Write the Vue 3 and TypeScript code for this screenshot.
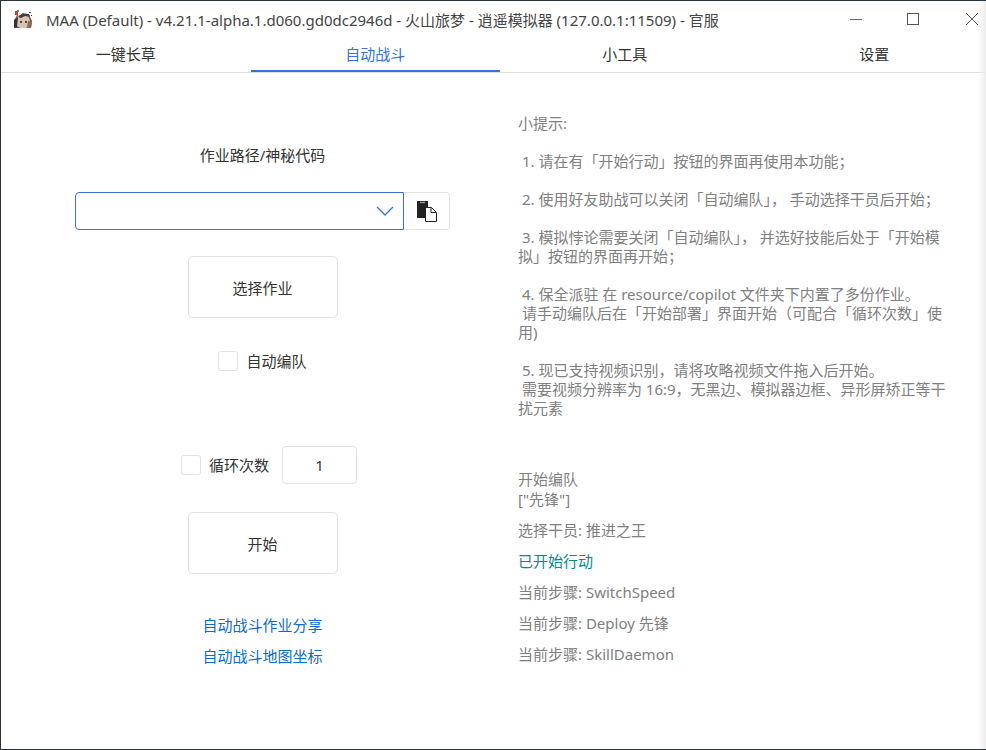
<script setup lang="ts">
const tabs = [
  { label: '一键长草', active: false },
  { label: '自动战斗', active: true },
  { label: '小工具', active: false },
  { label: '设置', active: false },
]
const tips = `小提示:

 1. 请在有「开始行动」按钮的界面再使用本功能；

 2. 使用好友助战可以关闭「自动编队」， 手动选择干员后开始；

 3. 模拟悖论需要关闭「自动编队」， 并选好技能后处于「开始模拟」按钮的界面再开始；

 4. 保全派驻 在 resource/copilot 文件夹下内置了多份作业。
 请手动编队后在「开始部署」界面开始（可配合「循环次数」使用)

 5. 现已支持视频识别，请将攻略视频文件拖入后开始。
 需要视频分辨率为 16:9，无黑边、模拟器边框、异形屏矫正等干扰元素`
const logs = [
  { text: '选择干员: 推进之王', ok: false },
  { text: '已开始行动', ok: true },
  { text: '当前步骤: SwitchSpeed', ok: false },
  { text: '当前步骤: Deploy 先锋', ok: false },
  { text: '当前步骤: SkillDaemon', ok: false },
]
</script>

<template>
  <div class="window">
    <div class="edge-shade"></div>
    <header class="titlebar">
      <svg class="app-icon" width="20" height="20" viewBox="0 0 20 20">
        <path d="M4 6h12l3 6-1 7H2L1 12z" fill="#6b5650" />
        <path d="M5 6h10l2 6-1 5-3 2H7l-3-2-1-5z" fill="#d8c4b4" />
        <path d="M1 11l4-3-1 10-3 1z" fill="#3a3136" />
        <path d="M15 12l4 1-1 6-4 0z" fill="#8a6a58" />
        <path d="M5 8l4-4 7 1 1 3-5-1-4 2z" fill="#4a3c3c" />
        <path d="M6 4l4-2 6 1 2 2-8-1-3 2z" fill="#f2f2f2" />
        <path d="M2 2h3v4H2z" fill="#c2413f" />
        <path d="M4 1h2v2H4z" fill="#4d8a5a" />
        <path d="M7 12h2v2H7zM12 12h2v2h-2z" fill="#5a4440" />
        <path d="M16 3h2v1h-2zM18 6h1v1h-1z" fill="#444" />
      </svg>
      <span class="title">MAA (Default) - v4.21.1-alpha.1.d060.gd0dc2946d - 火山旅梦 - 逍遥模拟器 (127.0.0.1:11509) - 官服</span>
      <div class="controls">
        <svg width="12" height="12" viewBox="0 0 12 12"><path d="M0 6.5h12" stroke="#666" /></svg>
        <svg class="ctl-max" width="12" height="12" viewBox="0 0 12 12"><rect x=".5" y=".5" width="11" height="11" fill="none" stroke="#555" /></svg>
        <svg class="ctl-close" width="12" height="12" viewBox="0 0 12 12"><path d="M0 0l12 12M12 0 0 12" stroke="#555" /></svg>
      </div>
    </header>

    <nav class="tabs">
      <div v-for="t in tabs" :key="t.label" class="tab" :class="{ active: t.active }">{{ t.label }}</div>
    </nav>

    <main class="content">
      <section class="left">
        <div class="path-label">作业路径/神秘代码</div>
        <div class="path-row">
          <div class="combo">
            <svg width="18" height="10" viewBox="0 0 18 10"><path d="M1 1l8 8 8-8" fill="none" stroke="#3b6fe0" stroke-width="1.3" /></svg>
          </div>
          <button class="paste">
            <svg width="20" height="21" viewBox="0 0 20 21">
              <path d="M0 0h11v17H0z" fill="#222" />
              <path d="M3 1.5h5" stroke="#999" stroke-width="1.4" />
              <path d="M8.5 6.5h6l5 5v9h-11z" fill="#fff" stroke="#222" />
              <path d="M14 6.5v5h5" fill="none" stroke="#222" />
            </svg>
          </button>
        </div>
        <button class="big select">选择作业</button>
        <label class="check auto"><span class="box"></span><span>自动编队</span></label>
        <div class="loop">
          <label class="check"><span class="box"></span><span>循环次数</span></label>
          <div class="count">1</div>
        </div>
        <button class="big start">开始</button>
        <a class="link first">自动战斗作业分享</a>
        <a class="link second">自动战斗地图坐标</a>
      </section>

      <section class="right">
        <div class="tips">{{ tips }}</div>
        <div class="log-block">开始编队<br />["先锋"]</div>
        <div v-for="l in logs" :key="l.text" class="log" :class="{ ok: l.ok }">{{ l.text }}</div>
      </section>
    </main>
  </div>
</template>

<style>
html, body { margin: 0; background: #fff; }
</style>

<style scoped>
.window {
  box-sizing: border-box;
  position: relative;
  width: 986px;
  height: 750px;
  border: 1px solid #2b3338;
  border-right: none;
  background: #fff;
  overflow: hidden;
  font-family: "Noto Sans", "Noto Sans CJK SC", sans-serif;
  font-size: 15px;
  color: #333;
  display: flex;
  flex-direction: column;
}
.edge-shade {
  position: absolute;
  top: 0;
  right: 0;
  bottom: 0;
  width: 8px;
  background: linear-gradient(to right, rgba(235, 235, 235, 0), #ededed);
  pointer-events: none;
}
.titlebar {
  height: 36px;
  display: flex;
  align-items: center;
  flex: none;
}
.app-icon { margin-left: 12px; flex: none; }
.title {
  margin-left: 13px;
  font-size: 15px;
  color: #444;
  white-space: nowrap;
}
.controls {
  margin-left: auto;
  display: flex;
  padding-right: 8px;
  flex: none;
}
.ctl-max { margin-left: 45px; }
.ctl-close { margin-left: 47px; }
.tabs {
  height: 36px;
  flex: none;
  box-sizing: border-box;
  display: grid;
  grid-template-columns: repeat(4, 249.5px);
  border-bottom: 1px solid #e0e0e0;
}
.tab {
  box-sizing: border-box;
  height: 35px;
  text-align: center;
  line-height: 34px;
  color: #333;
}
.tab.active { color: #3b6fe0; border-bottom: 2px solid #3b6fe0; }
.content { flex: 1; display: flex; min-height: 0; }
.left {
  width: 517px;
  flex: none;
  display: flex;
  flex-direction: column;
  align-items: center;
  padding-top: 70px;
  padding-left: 6px;
  box-sizing: border-box;
}
.path-label { line-height: 24px; }
.path-row { display: flex; margin-top: 25px; }
.combo {
  box-sizing: border-box;
  width: 329px;
  height: 38px;
  border: 1px solid #3b6fe0;
  border-radius: 4px 0 0 4px;
  display: flex;
  align-items: center;
  justify-content: flex-end;
  padding-right: 9px;
}
.paste {
  box-sizing: border-box;
  width: 46px;
  height: 38px;
  border: 1px solid #e4e4e4;
  border-left: none;
  border-radius: 0 4px 4px 0;
  background: #fff;
  padding: 0;
  display: flex;
  align-items: center;
  justify-content: center;
}
.big {
  box-sizing: border-box;
  width: 150px;
  height: 62px;
  border: 1px solid #e2e2e2;
  border-radius: 5px;
  background: #fff;
  font: inherit;
  color: #333;
}
.select { margin-top: 26px; }
.check { display: flex; align-items: center; gap: 8px; line-height: 20px; }
.box {
  box-sizing: border-box;
  width: 20px;
  height: 20px;
  border: 1px solid #e2e2e2;
  border-radius: 3px;
}
.auto { margin-top: 33px; }
.loop { display: flex; align-items: center; gap: 13px; margin-top: 75px; margin-left: 13px; }
.count {
  box-sizing: border-box;
  width: 75px;
  height: 38px;
  border: 1px solid #e2e2e2;
  border-radius: 4px;
  display: flex;
  align-items: center;
  justify-content: center;
}
.start { margin-top: 28px; }
.link { color: #0a6ccc; line-height: 24px; }
.first { margin-top: 39px; }
.second { margin-top: 7px; }
.right {
  flex: 1;
  padding: 41px 30px 0 0;
  color: #808080;
  min-width: 0;
}
.tips { white-space: pre-wrap; line-height: 19px; }
.log-block { margin-top: 51px; line-height: 20px; }
.log { margin-top: 11px; line-height: 20px; }
.ok { color: #008c8a; }
</style>
